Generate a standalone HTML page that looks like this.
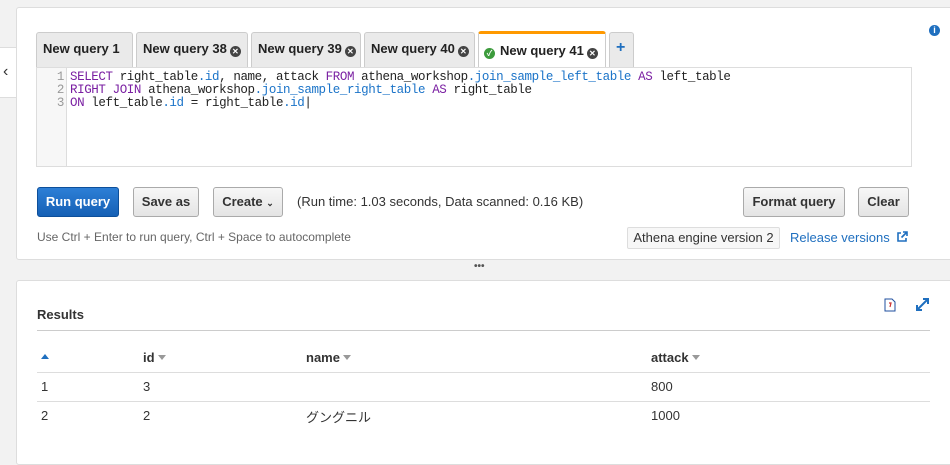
<!DOCTYPE html>
<html><head><meta charset="utf-8"><style>
*{box-sizing:border-box;margin:0;padding:0}
body{width:950px;height:459px;background:#f2f2f2;font-family:"Liberation Sans","Noto Sans CJK JP",sans-serif;font-size:13px;color:#333;position:relative;overflow:hidden}
.a{position:absolute}
.panel{background:#fff;border:1px solid #ddd;border-radius:3px}
.tab{position:absolute;top:32px;height:36px;background:#eaeaea;border:1px solid #ccc;border-bottom:none;border-radius:3px 3px 0 0;font-weight:bold;font-size:13px;color:#222;padding:8px 6px 0 6px;white-space:nowrap}
.x{display:inline-block;width:11px;height:11px;border-radius:50%;background:#444;color:#fff;font-size:8px;line-height:11px;text-align:center;vertical-align:-1px;margin-left:3px}
.btn{position:absolute;top:187px;height:30px;border:1px solid #aaa;border-radius:3px;background:linear-gradient(#f7f7f7,#e4e4e4);font-weight:bold;color:#333;text-align:center;line-height:28px}
.code{font-family:"Liberation Mono",monospace;font-size:12.5px;line-height:13px;color:#222;letter-spacing:-0.4px}
.kw{color:#7a1fa2}.bl{color:#1a73c8}
.th{font-weight:bold;color:#333;top:350px}
.tri{display:inline-block;width:0;height:0;border-left:4px solid transparent;border-right:4px solid transparent;border-top:5px solid #999;margin-left:3px;vertical-align:2px}
</style></head><body>
<div class="a panel" style="left:16px;top:7px;width:940px;height:253px"></div>
<div class="a" style="left:0;top:47px;width:17px;height:51px;background:#fff;border:1px solid #ddd;border-left:none"></div>
<div class="a" style="left:3px;top:63px;font-size:16px;color:#333">‹</div>
<div class="a" style="left:929px;top:25px;width:11px;height:11px;border-radius:50%;background:#1f6fbf;color:#fff;font-size:9px;font-weight:bold;text-align:center;line-height:11px">i</div>

<div class="tab" style="left:36px;width:97px">New query 1</div>
<div class="tab" style="left:136px;width:112px">New query 38<span class="x">✕</span></div>
<div class="tab" style="left:251px;width:110px">New query 39<span class="x">✕</span></div>
<div class="tab" style="left:364px;width:111px">New query 40<span class="x">✕</span></div>
<div class="tab" style="left:478px;width:128px;background:#fff;border-top:3px solid #f90;top:31px;height:37px;padding-left:5px;padding-top:9px"><span style="display:inline-block;width:11px;height:11px;border-radius:50%;background:#3c9b3c;color:#fff;font-size:8px;line-height:11px;text-align:center;vertical-align:-1px;margin-right:5px">✓</span>New query 41<span class="x">✕</span></div>
<div class="tab" style="left:609px;width:25px;color:#1f6fbf;font-size:16px;padding:6px 0 0 6px">+</div>

<div class="a" style="left:36px;top:67px;width:876px;height:100px;border:1px solid #ddd;background:#fff"></div>
<div class="a" style="left:37px;top:68px;width:30px;height:98px;background:#f7f7f7;border-right:1px solid #ddd"></div>
<div class="a code" style="left:52px;top:71px;color:#999;text-align:right;width:12px">1<br>2<br>3</div>
<div class="a code" style="left:70px;top:71px;white-space:pre"><span class="kw">SELECT</span> right_table<span class="bl">.id</span>, name, attack <span class="kw">FROM</span> athena_workshop<span class="bl">.join_sample_left_table</span> <span class="kw">AS</span> left_table
<span class="kw">RIGHT JOIN</span> athena_workshop<span class="bl">.join_sample_right_table</span> <span class="kw">AS</span> right_table
<span class="kw">ON</span> left_table<span class="bl">.id</span> = right_table<span class="bl">.id</span>|</div>

<div class="btn" style="left:37px;width:82px;background:linear-gradient(#2d7fd6,#1560b5);border-color:#0d4f9a;color:#fff">Run query</div>
<div class="btn" style="left:133px;width:66px">Save as</div>
<div class="btn" style="left:213px;width:70px">Create <span style="font-size:9px">⌄</span></div>
<div class="a" style="left:297px;top:194px;color:#333">(Run time: 1.03 seconds, Data scanned: 0.16 KB)</div>
<div class="btn" style="left:743px;width:102px">Format query</div>
<div class="btn" style="left:858px;width:51px">Clear</div>
<div class="a" style="left:37px;top:230px;font-size:12px;color:#666">Use Ctrl + Enter to run query, Ctrl + Space to autocomplete</div>
<div class="a" style="left:627px;top:227px;width:153px;height:22px;border:1px solid #ddd;border-radius:2px;background:#f7f7f7;font-size:13px;line-height:20px;text-align:center;color:#333">Athena engine version 2</div>
<div class="a" style="left:790px;top:230px;color:#1f6fbf">Release versions</div>
<svg class="a" style="left:896px;top:231px" width="12" height="12" viewBox="0 0 12 12"><path d="M5 2H2v8h8V7" fill="none" stroke="#1f6fbf" stroke-width="1.6"/><path d="M7 1h4v4M11 1L5.5 6.5" fill="none" stroke="#1f6fbf" stroke-width="1.6"/></svg>
<div class="a" style="left:474px;top:263px;font-size:10px;color:#555;line-height:8px;font-weight:bold">•••</div>

<div class="a panel" style="left:16px;top:280px;width:940px;height:185px"></div>
<div class="a" style="left:37px;top:307px;font-weight:bold;color:#333">Results</div>
<div class="a" style="left:37px;top:330px;width:893px;height:1px;background:#ccc"></div>
<svg class="a" style="left:884px;top:298px" width="12" height="14" viewBox="0 0 12 14"><path d="M1 1h7l3 3v9H1z" fill="#fff" stroke="#1f4f9f" stroke-width="1"/><path d="M5 5l2 0-1 4" fill="none" stroke="#c33" stroke-width="1.2"/></svg>
<svg class="a" style="left:915px;top:297px" width="15" height="15" viewBox="0 0 15 15"><path d="M2 13L13 2M8 2h5v5M2 8v5h5" fill="none" stroke="#1f6fbf" stroke-width="2"/></svg>
<div class="a" style="left:41px;top:354px;width:0;height:0;border-left:4px solid transparent;border-right:4px solid transparent;border-bottom:5px solid #1f6fbf"></div>
<div class="a th" style="left:143px">id<span class="tri"></span></div>
<div class="a th" style="left:306px">name<span class="tri"></span></div>
<div class="a th" style="left:651px">attack<span class="tri"></span></div>
<div class="a" style="left:37px;top:372px;width:893px;height:1px;background:#ddd"></div>
<div class="a" style="left:41px;top:379px">1</div><div class="a" style="left:143px;top:379px">3</div><div class="a" style="left:651px;top:379px">800</div>
<div class="a" style="left:37px;top:401px;width:893px;height:1px;background:#ddd"></div>
<div class="a" style="left:41px;top:408px">2</div><div class="a" style="left:143px;top:408px">2</div><div class="a" style="left:306px;top:407px">グングニル</div><div class="a" style="left:651px;top:408px">1000</div>
</body></html>
